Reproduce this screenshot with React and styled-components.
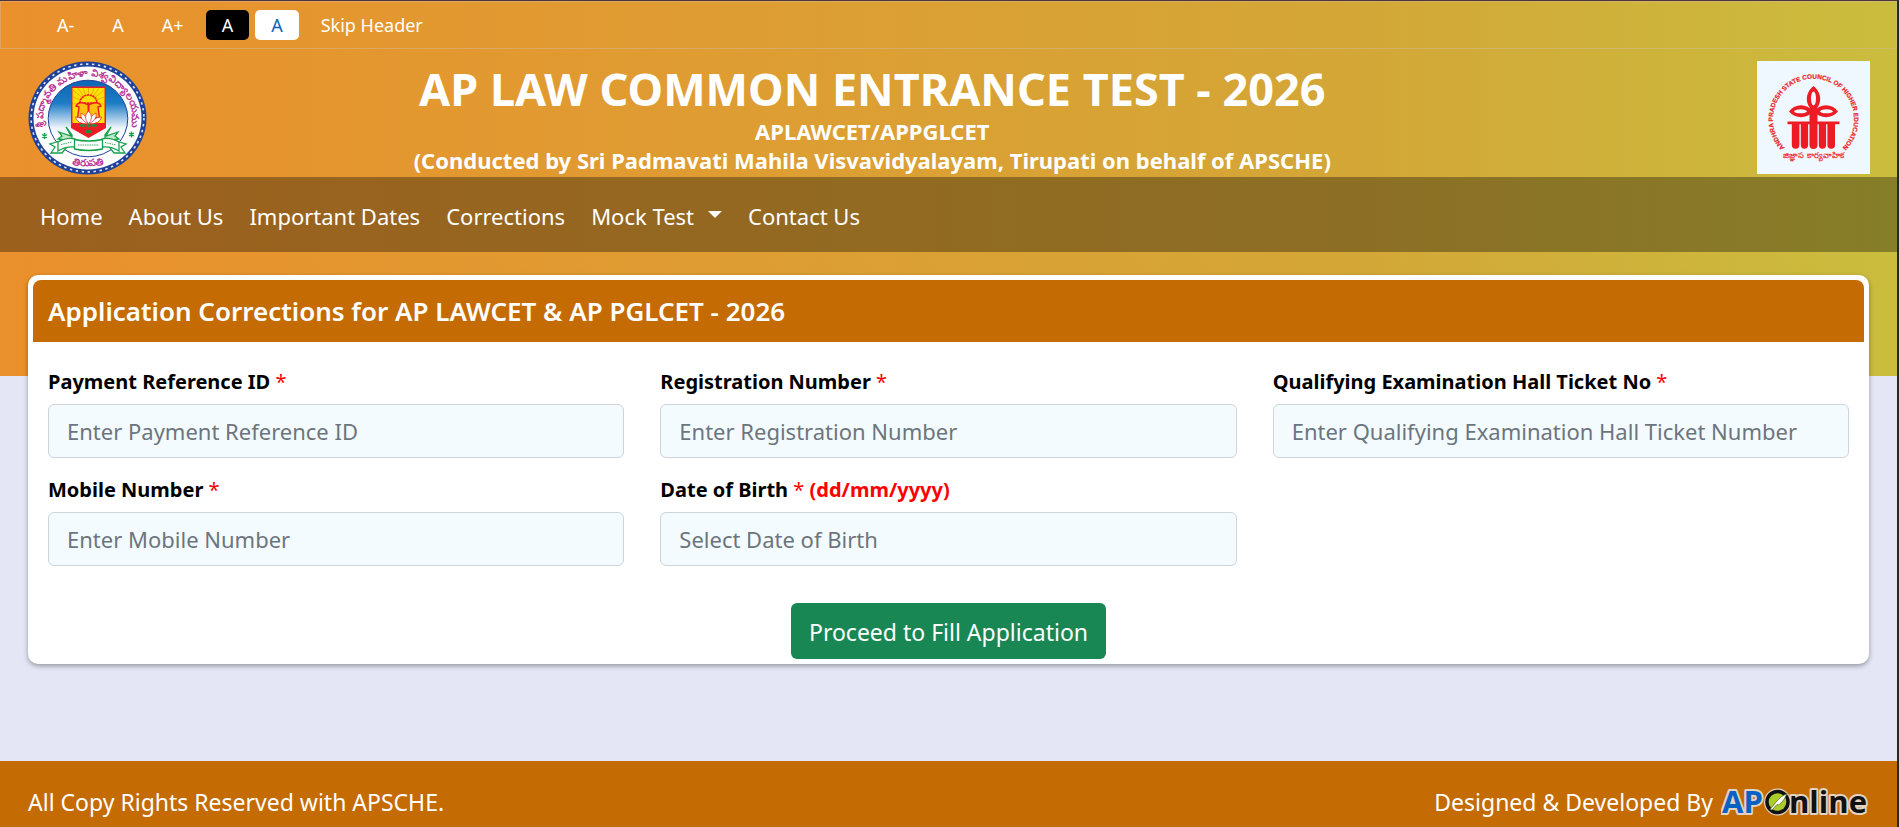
import React from "react";
import styled, { createGlobalStyle } from "styled-components";

const GlobalStyle = createGlobalStyle`
  * {
    box-sizing: border-box;
  }
  body {
    margin: 0;
    font-family: "Segoe UI", "Noto Sans", "Open Sans", sans-serif;
    color: #000;
  }
`;

const Page = styled.div`
  min-height: 100vh;
  display: flex;
  flex-direction: column;
  border-top: 1px solid #4f343c;
  border-right: 2px solid #282828;
  background: linear-gradient(
      90deg,
      #ea902c,
      #dc9f33 45%,
      #d3a737 72%,
      #cabd3e
    )
    no-repeat #e4e6f5;
  background-size: 100% 375px;
`;

const TopBar = styled.div`
  display: flex;
  align-items: center;
  gap: 6px;
  padding: 8px 40px;
  border: 1px solid rgba(210, 190, 160, 0.45);
`;

const TopButton = styled.button`
  border: 0;
  border-radius: 5px;
  padding: 0 16px;
  font-family: inherit;
  font-size: 18px;
  line-height: 30px;
  cursor: pointer;
  color: ${(props) => props.$color || "#fff"};
  background: ${(props) => props.$bg || "transparent"};
`;

const SkipLink = styled.a`
  padding: 0 16px;
  font-size: 18px;
  line-height: 30px;
  color: #fff;
  text-decoration: none;
`;

const Header = styled.header`
  display: grid;
  grid-template-columns: 1fr 9fr 2fr;
  padding: 12px 27px 2px 28px;
  color: #fff;
  text-align: center;
`;

const Title = styled.h1`
  margin: 0;
  font-size: 45px;
  line-height: 56px;
`;

const SubTitle = styled.h2`
  margin: 0;
  font-size: 22px;
  line-height: 29px;
`;

const Svg = styled.svg`
  display: block;
  margin-left: ${(props) => (props.$right ? "auto" : "0")};
`;

const Nav = styled.nav`
  display: flex;
  padding: 23px 27px 19px;
  background: rgba(0, 0, 0, 0.335);
`;

const NavLink = styled.a`
  display: flex;
  align-items: center;
  padding: 0 13px;
  font-size: 22px;
  line-height: 33px;
  color: #fff;
  text-decoration: none;
`;

const Caret = styled.span`
  margin: 0 0 4px 14px;
  border-top: 7px solid #fff;
  border-left: 7px solid transparent;
  border-right: 7px solid transparent;
`;

const Main = styled.main`
  flex: 1;
  padding: 23px 28px 40px;
`;

const Card = styled.section`
  padding: 5px;
  border-radius: 10px;
  background: #fff;
  box-shadow: 0 2px 5px rgba(0, 0, 0, 0.35);
`;

const CardTitle = styled.h2`
  margin: 0;
  padding: 12px 15px;
  border-radius: 8px 8px 0 0;
  background: #c56b03;
  color: #fff;
  font-size: 26px;
  font-weight: 600;
  line-height: 38px;
`;

const Form = styled.form`
  padding: 24px 15px 0;
`;

const Fields = styled.div`
  display: grid;
  grid-template-columns: repeat(3, 1fr);
  gap: 16px 36px;
`;

const Label = styled.label`
  display: block;
  margin-bottom: 6px;
  font-size: 20px;
  font-weight: 700;
  line-height: 32px;
`;

const Star = styled.span`
  color: #f00;
  font-weight: 400;
`;

const Hint = styled.span`
  color: #f00;
`;

const Input = styled.input`
  display: block;
  width: 100%;
  height: 54px;
  padding: 0 18px;
  border: 1px solid #ced4da;
  border-radius: 6px;
  background: #f3fbff;
  font-family: inherit;
  font-size: 22px;
  &::placeholder {
    color: #6c757d;
    opacity: 1;
  }
`;

const Submit = styled.button`
  display: block;
  margin: 37px auto 0;
  padding: 12px 18px 10px;
  border: 0;
  border-radius: 6px;
  background: #198754;
  color: #fff;
  font-family: inherit;
  font-size: 23px;
  line-height: 34px;
  cursor: pointer;
`;

const Footer = styled.footer`
  display: flex;
  align-items: center;
  justify-content: space-between;
  padding: 20px 28px 4px;
  background: #c56b03;
  color: #fff;
  font-size: 23px;
  line-height: 34px;
`;

const Credit = styled.div`
  display: flex;
  align-items: center;
  gap: 8px;
`;

const navItems = [
  { name: "Home" },
  { name: "About Us" },
  { name: "Important Dates" },
  { name: "Corrections" },
  { name: "Mock Test", menu: true },
  { name: "Contact Us" },
];

const fields = [
  {
    id: "payment",
    label: "Payment Reference ID",
    placeholder: "Enter Payment Reference ID",
  },
  {
    id: "registration",
    label: "Registration Number",
    placeholder: "Enter Registration Number",
  },
  {
    id: "hallticket",
    label: "Qualifying Examination Hall Ticket No",
    placeholder: "Enter Qualifying Examination Hall Ticket Number",
  },
  {
    id: "mobile",
    label: "Mobile Number",
    placeholder: "Enter Mobile Number",
  },
  {
    id: "dob",
    label: "Date of Birth",
    hint: "(dd/mm/yyyy)",
    placeholder: "Select Date of Birth",
  },
];

function UniversityLogo() {
  return (
    <Svg
      width="119"
      height="114"
      viewBox="0 0 119 114"
      role="img"
      aria-label="Sri Padmavati Mahila Visvavidyalayam"
    >
      <defs>
        <linearGradient id="sky" x1="0" y1="0" x2="0" y2="1">
          <stop offset="0" stopColor="#0a66b5" />
          <stop offset="0.3" stopColor="#1c7cc4" />
          <stop offset="0.62" stopColor="#eef3fb" />
          <stop offset="0.75" stopColor="#fff" />
        </linearGradient>
        <path id="nameArc" d="M16.5 68 A44.5 43 0 1 1 103 68" />
        <path id="cityArc" d="M30 100 Q60 110 90 100" />
      </defs>
      <ellipse cx="59.5" cy="57" rx="59" ry="56.5" fill="#1f4199" />
      <ellipse
        cx="59.5"
        cy="57"
        rx="56.4"
        ry="53.9"
        fill="none"
        stroke="#dfe8fb"
        strokeWidth="1.6"
        strokeDasharray="2.4 3.6"
      />
      <ellipse cx="59.5" cy="57" rx="54" ry="51.5" fill="#fff" />
      <ellipse
        cx="60"
        cy="57.5"
        rx="39.8"
        ry="38.3"
        fill="url(#sky)"
        stroke="#1f4199"
        strokeWidth="1"
      />
      <g fill="#b3228f" stroke="#b3228f" strokeWidth="0.25">
        <text fontSize="10" textAnchor="middle">
          <textPath href="#nameArc" startOffset="50%">
            శ్రీ పద్మావతి మహిళా విశ్వవిద్యాలయము
          </textPath>
        </text>
        <text fontSize="10" textAnchor="middle">
          <textPath href="#cityArc" startOffset="50%">
            తిరుపతి
          </textPath>
        </text>
      </g>
      <g stroke="#16a04c" strokeWidth="1.4">
        <path d="M16.5 72v6M14 73.5l5 3M19 73.5l-5 3" />
        <path d="M103.5 70.5v6M101 72l5 3M106 72l-5 3" />
      </g>
      {/* shield */}
      <path d="M43 25.5H78V67L60.5 77L43 67Z" fill="#ec1c24" />
      <path d="M44.5 27H76.5V62H44.5Z" fill="#fde100" />
      <g stroke="#e8891c" strokeWidth="0.6">
        <path d="M60.5 42L45 29M60.5 42L50 27M60.5 42L55 27M60.5 42V27M60.5 42L66 27M60.5 42L71 27M60.5 42L76 29M60.5 42L45 36M60.5 42L76 36M60.5 42L45 43M60.5 42L76 43" />
      </g>
      <path
        d="M52 42a8.5 8 0 0 1 17 0Z"
        fill="#fde100"
        stroke="#ec1c24"
        strokeWidth="1.7"
        strokeDasharray="2.2 0.6"
      />
      <path
        d="M48 45q3-6 12.5-1q9.5-5 12.5 1l-3 1l1.5 11h-22l1.5-11Z"
        fill="#fbc00f"
        stroke="#ec1c24"
        strokeWidth="1.4"
      />
      <path d="M60.5 42v13" stroke="#ec1c24" strokeWidth="2" />
      <g fill="#fff" stroke="#ec1c24" strokeWidth="0.7">
        <path d="M60.5 63q-12 0-13-7q7 0 13 7Z" />
        <path d="M60.5 63q12 0 13-7q-7 0-13 7Z" />
        <path d="M60.5 63q-9-4-7.5-11q6 3 7.5 11Z" />
        <path d="M60.5 63q9-4 7.5-11q-6 3-7.5 11Z" />
        <path d="M60.5 63q-6-7 0-13q6 6 0 13Z" />
      </g>
      <g fill="#258a3b">
        <ellipse cx="54.5" cy="64.5" rx="3" ry="1.4" />
        <ellipse cx="66" cy="64.5" rx="3" ry="1.4" />
        <circle cx="60.5" cy="64.5" r="2" />
        <ellipse cx="60.5" cy="70.5" rx="3.5" ry="1.8" />
      </g>
      {/* ribbon */}
      <g fill="#fff" stroke="#16a04c" strokeWidth="1.3">
        <path d="M32 80l-10 3l5 3l-4 6h11l4-5Z" />
        <path d="M88 80l10 3l-5 3l4 6H86l-4-5Z" />
        <path d="M31 71l12 4l-5-9l6 8v6l-14-2l4-3Z" fill="#bfe8cb" />
        <path d="M90 71l-12 4l5-9l-6 8v6l14-2l-4-3Z" fill="#bfe8cb" />
        <path d="M30 81q9-5 17-3v8q-9-1-17 4Z" />
        <path d="M91 81q-9-5-17-3v8q9-1 17 4Z" />
        <path d="M46.5 78.5q14 3 28 0v9.5q-14 3-28 0Z" />
      </g>
      <g stroke="#3aa860" strokeWidth="1" strokeDasharray="1.5 0.8">
        <path d="M33 83.5l11-2.5M50 84h21M77 81.5l11 2.5" />
      </g>
    </Svg>
  );
}

function CouncilLogo() {
  return (
    <Svg
      $right
      width="113"
      height="113"
      viewBox="0 0 113 113"
      role="img"
      aria-label="Andhra Pradesh State Council of Higher Education"
    >
      <defs>
        <path id="councilArc" d="M27.5 86.5 A40.5 40.5 0 1 1 85.5 86.5" />
      </defs>
      <rect width="113" height="113" fill="#f0f8ff" />
      <g fill="#ed1c24">
        <text
          fontFamily="Liberation Sans, sans-serif"
          fontWeight="700"
          fontSize="6.4"
          textAnchor="middle"
          stroke="#ed1c24"
          strokeWidth="0.2"
        >
          <textPath href="#councilArc" startOffset="50%">
            ANDHRA PRADESH STATE COUNCIL OF HIGHER EDUCATION
          </textPath>
        </text>
        <path d="M56.5 25C50 30 48 38 51.5 45L56.5 49L61.5 45C65 38 63 30 56.5 25Z" />
        <path d="M32 50.5C38 42 50 42 56 50.5C50 58 38 58 32 50.5Z" />
        <path d="M81 50.5C75 42 63 42 57 50.5C63 58 75 58 81 50.5Z" />
        <path d="M52.5 45H60.5V62H52.5Z" />
        <path d="M30.5 60.5H82.5V63.2H30.5Z" />
        <path d="M34.8 62h7.6v22a3.8 3.8 0 0 1-7.6 0Z" />
        <path d="M43.8 62h7.3v22a3.65 3.65 0 0 1-7.3 0Z" />
        <path d="M52.5 62h8v22a4 4 0 0 1-8 0Z" />
        <path d="M61.8 62h7.3v22a3.65 3.65 0 0 1-7.3 0Z" />
        <path d="M70.4 62h7.6v22a3.8 3.8 0 0 1-7.6 0Z" />
        <text
          x="56.5"
          y="97"
          fontSize="8.2"
          textAnchor="middle"
          stroke="#ed1c24"
          strokeWidth="0.15"
        >
          జిజ్ఞాస కార్యవాహిక
        </text>
      </g>
      <g fill="#f0f8ff">
        <ellipse cx="56.5" cy="37.5" rx="2.5" ry="7" />
        <ellipse cx="43.5" cy="50.3" rx="6.5" ry="2" />
        <ellipse cx="69.5" cy="50.3" rx="6.5" ry="2" />
      </g>
    </Svg>
  );
}

function ApOnlineLogo() {
  return (
    <Svg
      width="148"
      height="42"
      viewBox="0 -4 148 42"
      role="img"
      aria-label="APOnline"
    >
      <g
        fontFamily="Open Sans, sans-serif"
        fontWeight="700"
        fontSize="31"
        stroke="#e3d3c2"
        strokeWidth="4"
        strokeLinejoin="round"
        paintOrder="stroke"
      >
        <text x="1" y="28" fill="#0b62c4">
          AP
        </text>
        <text x="68" y="28" fill="#111">
          nline
        </text>
      </g>
      <circle cx="56.5" cy="17" r="13.5" fill="#e3d3c2" />
      <circle cx="56.5" cy="17" r="12.3" fill="#111" />
      <circle cx="56.5" cy="17" r="8.8" fill="#a9cc2b" />
      <path
        d="M49 24.5L55.5 16.5Q60 11 66 8.5Q64 14.5 59.5 18.5Q58 21 56 19.5L51 25Z"
        fill="#fff"
        stroke="#4b5a1a"
        strokeWidth="0.7"
      />
    </Svg>
  );
}

function App() {
  return (
    <Page>
      <GlobalStyle />
      <TopBar>
        <TopButton>A-</TopButton>
        <TopButton>A</TopButton>
        <TopButton>A+</TopButton>
        <TopButton $bg="#000">A</TopButton>
        <TopButton $bg="#fff" $color="#0a66b5">
          A
        </TopButton>
        <SkipLink href="#main">Skip Header</SkipLink>
      </TopBar>
      <Header>
        <UniversityLogo />
        <div>
          <Title>AP LAW COMMON ENTRANCE TEST - 2026</Title>
          <SubTitle>APLAWCET/APPGLCET</SubTitle>
          <SubTitle>
            (Conducted by Sri Padmavati Mahila Visvavidyalayam, Tirupati on
            behalf of APSCHE)
          </SubTitle>
        </div>
        <CouncilLogo />
      </Header>
      <Nav>
        {navItems.map((item) => (
          <NavLink href="#" key={item.name}>
            {item.name}
            {item.menu && <Caret />}
          </NavLink>
        ))}
      </Nav>
      <Main id="main">
        <Card>
          <CardTitle>
            Application Corrections for AP LAWCET &amp; AP PGLCET - 2026
          </CardTitle>
          <Form onSubmit={(e) => e.preventDefault()}>
            <Fields>
              {fields.map((field) => (
                <div key={field.id}>
                  <Label htmlFor={field.id}>
                    {field.label} <Star>*</Star>
                    {field.hint && <Hint> {field.hint}</Hint>}
                  </Label>
                  <Input
                    id={field.id}
                    type="text"
                    placeholder={field.placeholder}
                  />
                </div>
              ))}
            </Fields>
            <Submit type="submit">Proceed to Fill Application</Submit>
          </Form>
        </Card>
      </Main>
      <Footer>
        <span>All Copy Rights Reserved with APSCHE.</span>
        <Credit>
          Designed &amp; Developed By
          <ApOnlineLogo />
        </Credit>
      </Footer>
    </Page>
  );
}

export default App;
